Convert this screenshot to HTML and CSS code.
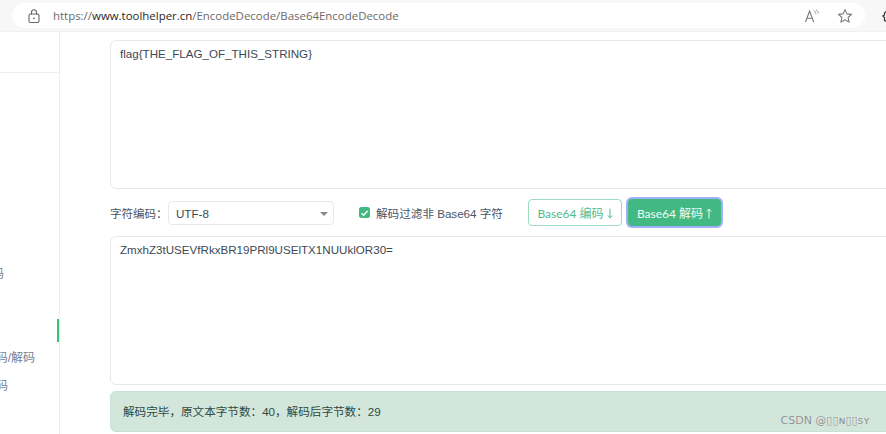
FILE: index.html
```html
<!DOCTYPE html>
<html lang="zh-CN">
<head>
<meta charset="utf-8">
<title>Base64 编码/解码</title>
<link rel="stylesheet" href="styles.css">
</head>
<body>
<header class="toolbar">
  <div class="address">
    <svg class="lock" viewBox="0 0 14 16" width="14" height="16"><path d="M4.500 6.500V4.200a2.500 2.500 0 0 1 5 0v2.300" fill="none" stroke="#666" stroke-width="1.100"/><rect x="2" y="6" width="10" height="8.500" rx="1.600" fill="none" stroke="#666" stroke-width="1.100"/><circle cx="7" cy="10.300" r="0.900" fill="#666"/></svg>
    <div class="url">https://<b>www.toolhelper.cn</b>/EncodeDecode/Base64EncodeDecode</div>
    <svg class="read" viewBox="0 0 16 14" width="16" height="14"><path d="M1.500 13 5.600 2 9.700 13M3 9.200h5.200" fill="none" stroke="#777" stroke-width="1.100"/><path d="M9.500 1.200c1.400.8 2.200 2 2.400 3.600M12 .6c1.400 1 2.200 2.300 2.400 4" fill="none" stroke="#999" stroke-width="1"/></svg>
    <svg class="star" viewBox="0 0 16 16" width="16" height="16"><path d="M8 1.600 9.900 5.900l4.600.5-3.400 3.100 1 4.600L8 11.700l-4.100 2.400 1-4.600L1.500 6.400l4.600-.5z" fill="none" stroke="#777" stroke-width="1.100" stroke-linejoin="round"/></svg>
  </div>
  <svg class="ext" viewBox="0 0 8 16" width="8" height="16"><path d="M6 1.500 2.500 5v2L.8 8l1.700 1.500v3L6 14" fill="none" stroke="#333" stroke-width="1.200"/></svg>
</header>
<div class="page">
  <aside class="sidebar">
    <div class="side-head"></div>
    <ul class="menu">
      <li class="item">编码</li>
      <li class="item"></li>
      <li class="item active"></li>
      <li class="item long">编码/解码</li>
      <li class="item mid">编码</li>
    </ul>
  </aside>
  <main class="main">
    <div class="textbox first">flag{THE_FLAG_OF_THIS_STRING}</div>
    <div class="controls">
      <span class="label">字符编码：</span>
      <div class="select">UTF-8<i class="caret"></i></div>
      <label class="check"><span class="tick"><svg viewBox="0 0 12 12" width="12" height="12"><path d="M2.800 6.200 5.100 8.400 9.300 3.900" fill="none" stroke="#fff" stroke-width="1.600"/></svg></span>解码过滤非 Base64 字符</label>
      <button class="btn outline">Base64 编码 <svg class="arrow" viewBox="0 0 6 11" width="6" height="11"><path d="M3 .5V10M1 7.500 3 10 5 7.500" fill="none" stroke="currentColor" stroke-width="1"/></svg></button>
      <button class="btn solid">Base64 解码 <svg class="arrow" viewBox="0 0 6 11" width="6" height="11"><path d="M3 10.500V1M1 3.500 3 1 5 3.500" fill="none" stroke="currentColor" stroke-width="1"/></svg></button>
    </div>
    <div class="textbox second">ZmxhZ3tUSEVfRkxBR19PRl9USElTX1NUUklOR30=</div>
    <div class="alert">解码完毕，原文本字节数：40，解码后字节数：29</div>
  </main>
</div>
<div class="watermark">CSDN @▯▯ɴ▯▯sʏ</div>
</body>
</html>
```
FILE: styles.css
```css
* { box-sizing: border-box; }
html, body { margin: 0; height: 100%; }
body {
  width: 886px;
  height: 434px;
  overflow: hidden;
  position: relative;
  background: #fff;
  font-family: "Liberation Sans", "Noto Sans CJK SC", sans-serif;
  color: #4a5568;
}
.toolbar {
  height: 32px;
  background: #f7f7f7;
  display: flex;
  align-items: flex-start;
  padding: 3px 0 0 12px;
  gap: 17px;
  border-bottom: 1px solid #f1f1f1;
}
.address {
  width: 853px;
  height: 25px;
  flex: none;
  background: #fff;
  border-radius: 13px;
  display: flex;
  align-items: center;
  padding: 0 12px 0 15px;
}
.lock { flex: none; margin-right: 12px; }
.url {
  flex: 1;
  font-family: "Open Sans", sans-serif;
  font-size: 11.450px;
  color: #6a6a6a;
  white-space: nowrap;
}
.url b { font-weight: 500; color: #1f1f1f; }
.read { margin-right: 17px; }
.ext { margin-top: 5px; flex: none; }
.page { display: flex; height: 402px; }
.sidebar {
  width: 60px;
  flex: none;
  border-right: 1px solid #eeeeee;
}
.side-head { height: 41px; border-bottom: 1px solid #eeeeee; }
.menu {
  list-style: none;
  margin: 187px 0 0;
  padding: 0;
}
.item {
  height: 28px;
  line-height: 28px;
  font-size: 12px;
  color: #718096;
  white-space: nowrap;
  overflow: hidden;
  display: flex;
  justify-content: flex-end;
  padding-right: 55px;
  position: relative;
}
.item.long { padding-right: 24px; }
.item.mid { padding-right: 51px; }
.item.active::after {
  content: "";
  position: absolute;
  right: 0;
  top: 3px;
  width: 2px;
  height: 23px;
  background: #38c172;
}
.main {
  flex: none;
  width: 826px;
  padding: 8px 0 0 50px;
  overflow: hidden;
}
.textbox {
  width: 800px;
  height: 149px;
  border: 1px solid #e8e8e8;
  border-radius: 6px;
  padding: 5px 9px;
  font-size: 11.600px;
  line-height: 15px;
  color: #3d4852;
}
.controls {
  height: 47px;
  display: flex;
  align-items: center;
  width: 800px;
  font-size: 11.600px;
}
.label { width: 58px; flex: none; color: #4a5568; white-space: nowrap; font-size: 11.500px; }
.select {
  width: 166px;
  height: 24px;
  flex: none;
  border: 1px solid #e8e8e8;
  border-radius: 4px;
  padding-left: 7px;
  line-height: 23px;
  font-size: 11.600px;
  position: relative;
  color: #3d4852;
}
.caret {
  position: absolute;
  right: 5px;
  top: 10px;
  border: 4px solid transparent;
  border-top: 4.500px solid #888;
  border-bottom: 0;
}
.check {
  display: flex;
  align-items: center;
  margin-left: 25px;
  width: 169px;
  flex: none;
  white-space: nowrap;
  color: #4a5568;
}
.tick {
  width: 11px;
  height: 11px;
  margin-right: 6px;
  background: #42b983;
  border-radius: 2.500px;
  display: flex;
  align-items: center;
  justify-content: center;
}
.btn {
  height: 27px;
  width: 94px;
  padding: 0;
  border-radius: 4px;
  font-family: "Lato", "Noto Sans CJK SC", sans-serif;
  font-size: 12px;
  white-space: nowrap;
  flex: none;
}
.arrow { vertical-align: -1px; }
.outline {
  background: #fff;
  border: 1px solid #9fdcbf;
  color: #52bd8c;
}
.solid {
  margin-left: 6px;
  width: 93px;
  background: #42b983;
  border: 1px solid #42b983;
  color: #f2fbf6;
  box-shadow: 0 0 0 2px #9fb0f6;
}
.alert {
  margin-top: 6px;
  width: 800px;
  height: 41px;
  background: #d2e6dc;
  border: 1px solid #c6e2d4;
  border-radius: 6px;
  padding: 0 12px;
  line-height: 39px;
  font-size: 11.600px;
  color: #2f4a3f;
}
.watermark {
  position: absolute;
  right: 16px;
  bottom: 7px;
  font-family: "DejaVu Sans", sans-serif;
  font-size: 11px;
  color: #8a8f8c;
  text-shadow: 0 0 1px #fff;
  white-space: nowrap;
}
```
